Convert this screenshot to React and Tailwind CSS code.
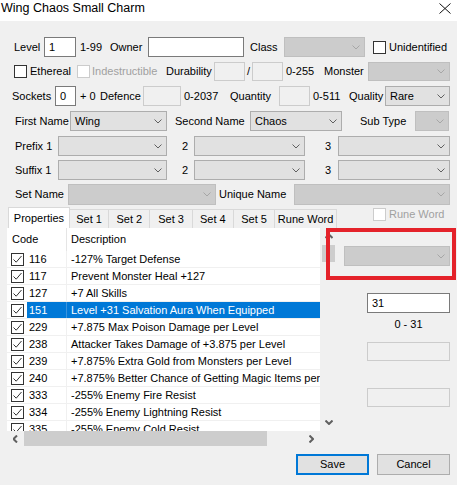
import React from "react";

const FONT = { fontFamily: '"Liberation Sans", Arial, sans-serif' };

function Chevron({ dir = "down", disabled = false, bold = false }) {
  const color = disabled ? "#a6a6a6" : bold ? "#606060" : "#606060";
  const sw = bold ? 2 : 1;
  const paths = {
    down: "M0.5 0.5 L4 4 L7.5 0.5",
    up: "M0.5 4 L4 0.5 L7.5 4",
    left: "M4 0.5 L0.5 4 L4 7.5",
    right: "M0.5 0.5 L4 4 L0.5 7.5",
  };
  const isV = dir === "down" || dir === "up";
  return (
    <svg
      width={isV ? 8 : 5}
      height={isV ? 5 : 8}
      viewBox={isV ? "0 0 8 5" : "0 0 5 8"}
      className="block"
    >
      <path d={paths[dir]} fill="none" stroke={color} strokeWidth={sw} />
    </svg>
  );
}

function Combo({ w, value = "", disabled = false }) {
  return (
    <div
      className={`${w} h-full shrink-0 flex items-center border ${
        disabled ? "bg-[#cccccc] border-[#bfbfbf]" : "bg-[#e1e1e1] border-[#adadad]"
      }`}
    >
      <span className="flex-1 pl-[4px] whitespace-nowrap overflow-hidden">{value}</span>
      <span className="w-[17px] flex justify-center">
        <Chevron disabled={disabled} />
      </span>
    </div>
  );
}

function Edit({ w, value = "", disabled = false }) {
  return (
    <div
      className={`${w} h-full shrink-0 flex items-center border pl-[4px] ${
        disabled ? "bg-[#f0f0f0] border-[#cccccc]" : "bg-white border-[#7a7a7a]"
      }`}
    >
      {value}
    </div>
  );
}

function Check({ checked = false, disabled = false, className = "" }) {
  return (
    <div
      className={`w-[13px] h-[13px] shrink-0 bg-white border ${
        disabled ? "border-[#cccccc]" : "border-[#333333]"
      } ${className}`}
    >
      {checked && (
        <svg width="11" height="11" viewBox="0 0 11 11" className="block">
          <path d="M1.5 5.5 L4.2 8.2 L9.5 2" fill="none" stroke="#333333" strokeWidth="1" />
        </svg>
      )}
    </div>
  );
}

function Label({ w, children, className = "" }) {
  return <span className={`${w} shrink-0 whitespace-nowrap ${className}`}>{children}</span>;
}

const rows = [
  ["116", "-127% Target Defense"],
  ["117", "Prevent Monster Heal +127"],
  ["127", "+7 All Skills"],
  ["151", "Level +31 Salvation Aura When Equipped", true],
  ["229", "+7.875 Max Poison Damage per Level"],
  ["238", "Attacker Takes Damage of +3.875 per Level"],
  ["239", "+7.875% Extra Gold from Monsters per Level"],
  ["240", "+7.875% Better Chance of Getting Magic Items per Level"],
  ["333", "-255% Enemy Fire Resist"],
  ["334", "-255% Enemy Lightning Resist"],
  ["335", "-255% Enemy Cold Resist"],
];

const tabs = [
  ["Set 1", "w-[40px]"],
  ["Set 2", "w-[42px]"],
  ["Set 3", "w-[43px]"],
  ["Set 4", "w-[42px]"],
  ["Set 5", "w-[42px]"],
  ["Rune Word", "w-[63px]"],
];

export default function App() {
  return (
    <div
      className="relative w-[457px] h-[485px] overflow-hidden bg-[#f0f0f0] text-black text-[11px] leading-[13px]"
      style={FONT}
    >
      {/* Title bar */}
      <div className="h-[21px] bg-white flex justify-between items-start">
        <span className="pl-[1px] text-[12.5px] leading-[16px]">Wing Chaos Small Charm</span>
        <svg width="12" height="11" viewBox="0 0 12 11" className="mt-[3px] mr-[6px]">
          <path d="M0.5 0.5 L11.5 10.5 M11.5 0.5 L0.5 10.5" stroke="#111" strokeWidth="1" />
        </svg>
      </div>

      {/* Row 1 */}
      <div className="flex items-center h-[20px] mt-[16px]">
        <Label w="w-[30px]" className="ml-[14px]">Level</Label>
        <Edit w="w-[32px]" value="1" />
        <Label w="w-[30px]" className="ml-[4px]">1-99</Label>
        <Label w="w-[38px]">Owner</Label>
        <Edit w="w-[96px]" />
        <Label w="w-[34px]" className="ml-[6px]">Class</Label>
        <Combo w="w-[81px]" disabled />
        <Check className="ml-[8px]" />
        <Label w="w-[60px]" className="ml-[3px]">Unidentified</Label>
      </div>

      {/* Row 2 */}
      <div className="flex items-center h-[19px] mt-[5px]">
        <Check className="ml-[14px]" />
        <Label w="w-[44px]" className="ml-[3px]">Ethereal</Label>
        <Check className="ml-[3px]" disabled />
        <Label w="w-[74px]" className="ml-[2px] text-[#a0a0a0]">Indestructible</Label>
        <Label w="w-[48px]">Durability</Label>
        <Edit w="w-[31px]" disabled />
        <Label w="w-[7px]" className="text-center">/</Label>
        <Edit w="w-[31px]" disabled />
        <Label w="w-[38px]" className="ml-[3px]">0-255</Label>
        <Label w="w-[44px]">Monster</Label>
        <Combo w="w-[82px]" disabled />
      </div>

      {/* Row 3 */}
      <div className="flex items-center h-[20px] mt-[5px]">
        <Label w="w-[43px]" className="ml-[12px]">Sockets</Label>
        <Edit w="w-[21px]" value="0" />
        <Label w="w-[20px]" className="ml-[4px]">+ 0</Label>
        <Label w="w-[43px]">Defence</Label>
        <Edit w="w-[38px]" disabled />
        <Label w="w-[46px]" className="ml-[3px]">0-2037</Label>
        <Label w="w-[49px]">Quantity</Label>
        <Edit w="w-[31px]" disabled />
        <Label w="w-[36px]" className="ml-[3px]">0-511</Label>
        <Label w="w-[36px]">Quality</Label>
        <Combo w="w-[65px]" value="Rare" />
      </div>

      {/* Row 4 */}
      <div className="flex items-center h-[20px] mt-[5px]">
        <Label w="w-[55px]" className="ml-[15px]">First Name</Label>
        <Combo w="w-[97px]" value="Wing" />
        <Label w="w-[75px]" className="ml-[8px]">Second Name</Label>
        <Combo w="w-[92px]" value="Chaos" />
        <Label w="w-[55px]" className="ml-[18px]">Sub Type</Label>
        <Combo w="w-[34px]" disabled />
      </div>

      {/* Row 5 */}
      <div className="flex items-center h-[20px] mt-[5px]">
        <Label w="w-[43px]" className="ml-[15px]">Prefix 1</Label>
        <Combo w="w-[109px]" />
        <Label w="w-[12px]" className="ml-[15px]">2</Label>
        <Combo w="w-[111px]" />
        <Label w="w-[13px]" className="ml-[20px]">3</Label>
        <Combo w="w-[112px]" />
      </div>

      {/* Row 6 */}
      <div className="flex items-center h-[20px] mt-[4px]">
        <Label w="w-[43px]" className="ml-[15px]">Suffix 1</Label>
        <Combo w="w-[109px]" />
        <Label w="w-[12px]" className="ml-[15px]">2</Label>
        <Combo w="w-[111px]" />
        <Label w="w-[13px]" className="ml-[20px]">3</Label>
        <Combo w="w-[112px]" />
      </div>

      {/* Row 7 */}
      <div className="flex items-center h-[21px] mt-[4px]">
        <Label w="w-[53px]" className="ml-[15px]">Set Name</Label>
        <Combo w="w-[148px]" disabled />
        <Label w="w-[75px]" className="ml-[3px]">Unique Name</Label>
        <Combo w="w-[156px]" disabled />
      </div>

      {/* Bottom area */}
      <div className="flex mt-[2px]">
        {/* Left: tabs + list */}
        <div className="w-[337px] shrink-0 pl-[7px]">
          <div className="flex items-end h-[21px] pl-[1px]">
            <div className="w-[63px] h-[21px] bg-white border border-b-0 border-[#d9d9d9] flex items-center justify-center">
              Properties
            </div>
            {tabs.map(([t, w]) => (
              <div
                key={t}
                className={`${w} h-[19px] bg-[#f0f0f0] border-t border-r border-[#d9d9d9] flex items-center justify-center`}
              >
                {t}
              </div>
            ))}
          </div>

          <div className="flex">
            <div className="w-[313px] h-[203px] bg-white overflow-hidden">
              <div className="flex h-[23px] items-center">
                <div className="w-[60px] h-full flex items-center pl-[5px] border-r border-[#e5e5e5]">Code</div>
                <div className="flex-1 pl-[4px]">Description</div>
              </div>
              {rows.map(([code, desc, sel]) => (
                <div key={code} className="flex h-[17px] border-b border-[#f0f0f0]">
                  <div className="w-[20px] shrink-0 flex items-center pl-[4px]">
                    <Check checked />
                  </div>
                  <div
                    className={`w-[40px] shrink-0 flex items-center pl-[2px] border-r ${
                      sel ? "bg-[#0078d7] text-white border-[#3a93dd]" : "border-[#f0f0f0]"
                    }`}
                  >
                    {code}
                  </div>
                  <div
                    className={`flex-1 flex items-center pl-[4px] whitespace-nowrap overflow-hidden ${
                      sel ? "bg-[#0078d7] text-white" : ""
                    }`}
                  >
                    {desc}
                  </div>
                </div>
              ))}
            </div>
            {/* vertical scrollbar */}
            <div className="w-[17px] h-[203px] flex flex-col">
              <div className="h-[17px] flex items-center justify-center">
                <Chevron dir="up" bold />
              </div>
              <div className="h-[17px] mx-[2px] bg-[#cdcdcd]" />
              <div className="flex-1" />
              <div className="h-[17px] flex items-center justify-center">
                <Chevron dir="down" bold />
              </div>
            </div>
          </div>
          {/* horizontal scrollbar */}
          <div className="w-[313px] h-[15px] flex items-center">
            <div className="w-[17px] h-full flex items-center justify-center">
              <Chevron dir="left" bold />
            </div>
            <div className="w-[243px] h-full bg-[#cdcdcd]" />
            <div className="flex-1" />
            <div className="w-[17px] h-full flex items-center justify-center">
              <Chevron dir="right" bold />
            </div>
          </div>
        </div>

        {/* Right column */}
        <div className="flex-1 flex flex-col">
          <div className="flex items-center h-[13px] mt-[1px]">
            <Check disabled className="ml-[36px]" />
            <Label w="w-[60px]" className="ml-[3px] text-[#a0a0a0]">Rune Word</Label>
          </div>
          <div className="h-[20px] mt-[25px] ml-[7px] flex">
            <Combo w="w-[106px]" disabled />
          </div>
          <div className="h-[20px] mt-[27px] ml-[30px] flex">
            <Edit w="w-[83px]" value="31" />
          </div>
          <div className="ml-[30px] w-[83px] text-center mt-[5px] h-[13px]">0 - 31</div>
          <div className="h-[19px] mt-[11px] ml-[30px] flex">
            <Edit w="w-[83px]" disabled />
          </div>
          <div className="h-[19px] mt-[27px] ml-[30px] flex">
            <Edit w="w-[83px]" disabled />
          </div>
        </div>
      </div>

      {/* Buttons */}
      <div className="flex justify-end gap-[8px] pr-[7px] mt-[8px]">
        <button className="w-[73px] h-[21px] bg-[#e1e1e1] border-2 border-[#0078d7]">Save</button>
        <button className="w-[73px] h-[21px] bg-[#e1e1e1] border border-[#adadad]">Cancel</button>
      </div>

      {/* Red annotation box */}
      <div className="absolute left-[326px] top-[228px] w-[130px] h-[52px] border-4 border-[#e4222a] pointer-events-none" />
    </div>
  );
}
